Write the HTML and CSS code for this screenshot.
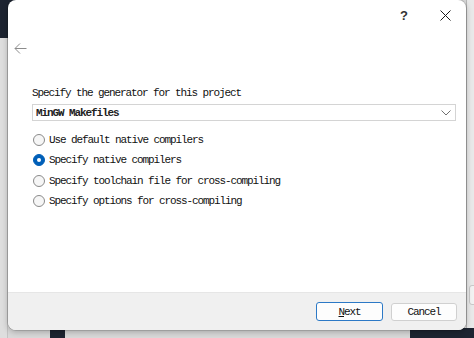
FILE: index.html
```html
<!DOCTYPE html>
<html lang="en">
<head>
    <meta charset="UTF-8">
    <meta name="viewport" content="width=device-width, initial-scale=1.0">
    <title>CMake Setup</title>
    <link rel="stylesheet" href="styles.css">
</head>
<body>
    <!-- desktop windows behind the dialog -->
    <div class="win win-dark"></div>
    <div class="win win-left"></div>
    <div class="win win-right"></div>
    <div class="win win-right-box"></div>
    <div class="win win-bottom-a"></div>
    <div class="win win-bottom-b"></div>

    <div class="dialog">
        <div class="titlebar">
            <span class="tb-btn help">?</span>
            <span class="tb-btn close">
                <svg width="11" height="11" viewBox="0 0 11 11"><path d="M0.5 0.5L10.5 10.5M10.5 0.5L0.5 10.5" stroke="#1a1a1a" stroke-width="1"/></svg>
            </span>
        </div>
        <div class="nav">
            <svg width="13" height="11" viewBox="0 0 13 11"><path d="M12.5 5.5H1M6 0.5L1 5.5L6 10.5" fill="none" stroke="#8c8c8c" stroke-width="1"/></svg>
        </div>
        <div class="content">
            <p class="label">Specify the generator for this project</p>
            <div class="combo">
                <span class="combo-text">MinGW Makefiles</span>
                <svg width="10" height="6" viewBox="0 0 10 6"><path d="M0.5 0.5L5 5L9.5 0.5" fill="none" stroke="#707070" stroke-width="1"/></svg>
            </div>
            <div class="options">
                <label class="opt"><span class="radio"></span>Use default native compilers</label>
                <label class="opt"><span class="radio checked"></span>Specify native compilers</label>
                <label class="opt"><span class="radio"></span>Specify toolchain file for cross-compiling</label>
                <label class="opt"><span class="radio"></span>Specify options for cross-compiling</label>
            </div>
        </div>
        <div class="footer">
            <button class="btn primary"><u>N</u>ext</button>
            <button class="btn">Cancel</button>
        </div>
    </div>
</body>
</html>
```

FILE: styles.css
```css
html, body{
    margin: 0;
    padding: 0;
}
body{
    width: 474px;
    height: 338px;
    overflow: hidden;
    position: relative;
    background: #d9d9d9;
    font-family: "Liberation Mono", "DejaVu Sans Mono", monospace;
}
.win{
    position: absolute;
}
.win-dark{
    left: 0;
    top: 0;
    width: 40px;
    height: 38px;
    background: #1d2431;
}
.win-left{
    left: 0;
    top: 38px;
    width: 7px;
    height: 300px;
    background: #dedede;
    border-right: 1px solid #c4c4c4;
}
.win-right{
    left: 466px;
    top: 0;
    width: 8px;
    height: 338px;
    background: #e9e9e9;
    border-left: 1px solid #b8b8b8;
}
.win-right-box{
    left: 469px;
    top: 285px;
    width: 8px;
    height: 18px;
    border: 1px solid #c8c8c8;
    border-radius: 3px;
    background: #f2f2f2;
}
.win-bottom-a{
    left: 50px;
    top: 328px;
    width: 15px;
    height: 10px;
    background: #1d2431;
}
.win-bottom-b{
    left: 410px;
    top: 328px;
    width: 64px;
    height: 10px;
    background: #1d2431;
}
.dialog{
    position: absolute;
    left: 8px;
    top: 0;
    width: 458px;
    height: 330px;
    background: #fff;
    border-radius: 8px;
    box-shadow: 0 0 0 1px rgba(0, 0, 0, 0.12), 0 2px 6px rgba(0, 0, 0, 0.25);
    display: flex;
    flex-direction: column;
    overflow: hidden;
}
.titlebar{
    height: 30px;
    display: flex;
    justify-content: flex-end;
    align-items: center;
}
.tb-btn{
    height: 30px;
    display: flex;
    align-items: center;
    justify-content: center;
}
.help{
    width: 40px;
    font-family: "Liberation Sans", Arial, sans-serif;
    font-size: 13px;
    font-weight: bold;
    color: #333;
}
.close{
    width: 42px;
    padding-top: 1px;
}
.nav{
    height: 36px;
    display: flex;
    align-items: center;
    padding-left: 6px;
    padding-top: 1px;
    box-sizing: border-box;
}
.content{
    flex: 1;
    padding: 20px 10px 0 24px;
}
.label{
    margin: 0 0 4px 0;
    height: 14px;
    line-height: 14px;
    font-size: 11px;
    letter-spacing: -1.1px;
    color: #111;
}
.combo{
    height: 15px;
    border: 1px solid #d4d4d4;
    display: flex;
    align-items: center;
    justify-content: space-between;
    padding: 0 4px 0 3px;
}
.combo-text{
    font-size: 11px;
    letter-spacing: -1.1px;
    font-weight: bold;
    color: #222;
}
.options{
    margin-top: 9px;
}
.opt{
    height: 20.3px;
    display: flex;
    align-items: center;
    font-size: 11px;
    letter-spacing: -1.1px;
    color: #111;
}
.radio{
    width: 10px;
    height: 10px;
    border: 1px solid #8a8a8a;
    border-radius: 50%;
    background: #f6f6f6;
    margin: 0 4px 0 1px;
    position: relative;
}
.radio.checked{
    border-color: #005fb8;
    background: #005fb8;
}
.radio.checked::after{
    content: "";
    position: absolute;
    left: 3px;
    top: 3px;
    width: 4px;
    height: 4px;
    border-radius: 50%;
    background: #fff;
}
.footer{
    height: 37px;
    background: #f0f0f0;
    border-top: 1px solid #e6e6e6;
    display: flex;
    justify-content: flex-end;
    align-items: center;
    gap: 8px;
    padding-right: 9px;
}
.btn{
    width: 66px;
    height: 18px;
    padding: 0;
    background: #fdfdfd;
    border: 1px solid #d0d0d0;
    border-radius: 3px;
    font-family: "Liberation Mono", "DejaVu Sans Mono", monospace;
    font-size: 11px;
    letter-spacing: -1.1px;
    color: #111;
    margin-top: 1px;
}
.btn.primary{
    width: 67px;
    height: 19px;
    border-color: #2c79c6;
    margin-top: 0;
}
```
